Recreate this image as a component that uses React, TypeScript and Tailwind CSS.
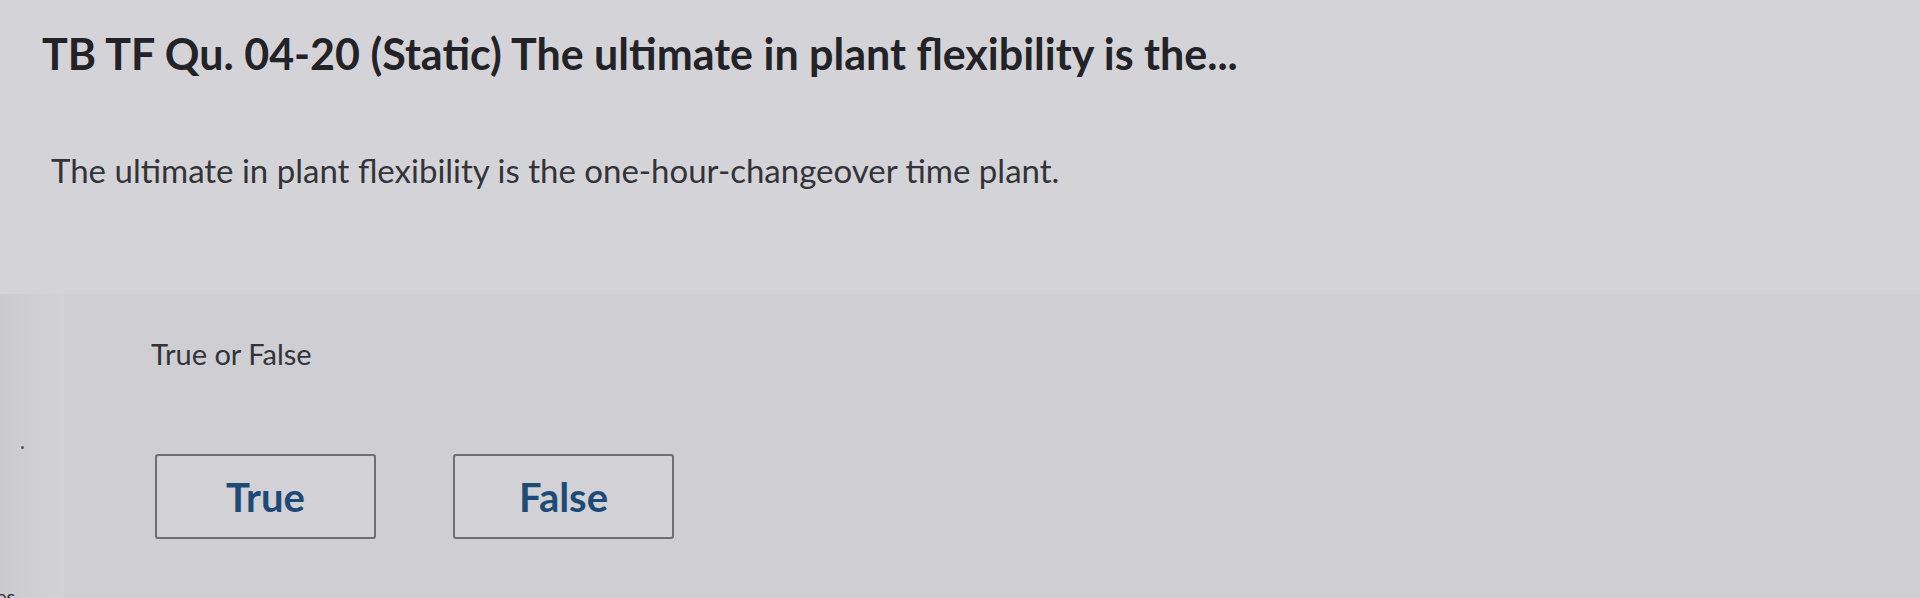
import { useState } from 'react'

type Choice = 'True' | 'False' | null

const choices: Exclude<Choice, null>[] = ['True', 'False']

export default function App() {
  const [picked, setPicked] = useState<Choice>(null)

  return (
    <div className="flex h-[598px] w-[1920px] flex-col overflow-hidden bg-[#d4d3d8] font-['Lato','Liberation_Sans',sans-serif] text-[#2a2a2e]">
      <header className="pl-[42px] pt-[26px]">
        <h1 className="text-[43px] font-bold leading-[56px] text-[#232327]">
          TB TF Qu. 04-20 (Static) The ultimate in plant flexibility is the...
        </h1>
      </header>

      <p className="mt-[68px] pl-[51px] text-[33px] leading-[40px] text-[#333338]">
        The ultimate in plant flexibility is the one-hour-changeover time plant.
      </p>

      <div className="mt-[104px] flex flex-1">
        {/* left rail */}
        <aside className="flex w-[64px] shrink-0 flex-col bg-gradient-to-r from-[#cbcacf] to-[#d3d2d7]">
          <div className="ml-[21px] mt-[152px] h-[3px] w-[3px] rounded-full bg-[#55555a]" />
          <span className="mt-auto -mb-[10px] -ml-[4px] text-[20px] leading-[24px] text-[#333]">es</span>
        </aside>

        <section className="flex-1 bg-[#cfced3] pl-[87px] pt-[42px]">
          <div className="text-[29px] leading-[36px] text-[#333338]">True or False</div>
          <div className="ml-[4px] mt-[82px] flex gap-[77px]">
            {choices.map((c) => (
              <button
                key={c}
                onClick={() => setPicked(c)}
                className={`h-[85px] w-[221px] rounded-[3px] border-2 border-[#6e6e73] text-[40px] font-bold text-[#1d4b76] ${picked === c ? 'bg-[#c4d3e3]' : 'bg-[#d2d1d6]'}`}
              >
                {c}
              </button>
            ))}
          </div>
        </section>
      </div>
    </div>
  )
}
